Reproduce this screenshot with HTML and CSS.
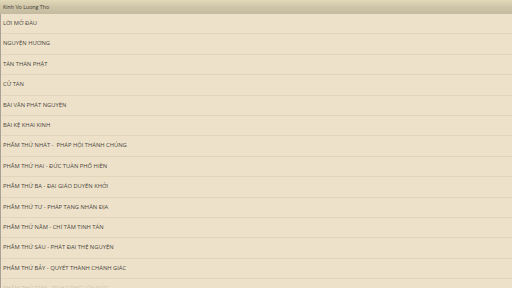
FILE: index.html
```html
<!DOCTYPE html>
<html lang="vi">
<head>
	<title>Kinh Vo Luong Tho</title>
	<meta charset="utf-8">
	<link rel="stylesheet" href="styles.css">
</head>
<body>

<!-- wrap -->
<div id="p_wrapper">

	<div class="titleBar">Kinh Vo Luong Tho</div>

	<ul class="chapterList">
		<li>LỜI MỞ ĐẦU</li>
		<li>NGUYỆN HƯƠNG</li>
		<li>TÁN THÁN PHẬT</li>
		<li>CỬ TÁN</li>
		<li>BÀI VĂN PHÁT NGUYỆN</li>
		<li>BÀI KỆ KHAI KINH</li>
		<li>PHẨM THỨ NHẤT -&nbsp; PHÁP HỘI THÁNH CHÚNG</li>
		<li>PHẨM THỨ HAI - ĐỨC TUẦN PHỔ HIỀN</li>
		<li>PHẨM THỨ BA - ĐẠI GIÁO DUYÊN KHỞI</li>
		<li>PHẨM THỨ TƯ - PHÁP TẠNG NHÂN ĐỊA</li>
		<li>PHẨM THỨ NĂM - CHÍ TÂM TINH TẤN</li>
		<li>PHẨM THỨ SÁU - PHÁT ĐẠI THỆ NGUYỆN</li>
		<li>PHẨM THỨ BẢY - QUYẾT THÀNH CHÁNH GIÁC</li>
		<li class="fade">PHẨM THỨ TÁM - TÍCH CÔNG LŨY ĐỨC</li>
	</ul>

</div>
<!-- //wrap -->

</body>
</html>
```

FILE: styles.css
```css
*{padding: 0; margin:0; border: 0;}
html, body {width: 512px;height: 288px;overflow: hidden;background: #ede1c9;}
body {font-family: "Open Sans", "Noto Sans", sans-serif;color: #4a463e;}

#p_wrapper {width: 512px;height: 288px;overflow: hidden;}

.titleBar {height: 14px;line-height: 14px;padding-left: 3px;font-size: 5.3px;color: #3b372e;background: linear-gradient(#e2d9b9 0, #d0c6a9 45%, #c3baa1 100%);}

.chapterList {list-style: none;border-left: 1px solid #a8a194;}
.chapterList li {height: 20.4px;line-height: 19.4px;padding-left: 2px;font-size: 5.8px;border-bottom: 1px solid #e3d5ba;box-sizing: border-box;white-space: pre;}
.chapterList li.fade {color: #cfc3ad;}
```
